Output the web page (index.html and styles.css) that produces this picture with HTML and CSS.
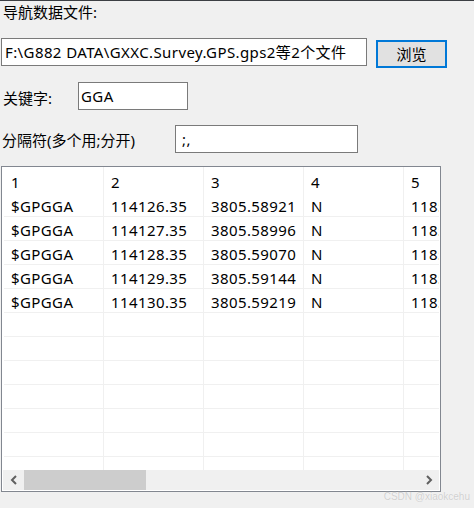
FILE: index.html
```html
<!DOCTYPE html>
<html lang="zh-CN">
<head>
<meta charset="utf-8">
<title>导航数据</title>
<link rel="stylesheet" href="styles.css">
</head>
<body>
<div class="window">
  <div class="label title-label">导航数据文件:</div>
  <div class="row file-row">
    <div class="field file-field">F:\G882 DATA\GXXC.Survey.GPS.gps2等2个文件</div>
    <div class="button">浏览</div>
  </div>
  <div class="row kw-row">
    <div class="label kw-label">关键字:</div>
    <div class="field kw-field">GGA</div>
  </div>
  <div class="row sep-row">
    <div class="label sep-label">分隔符(多个用;分开)</div>
    <div class="field sep-field">;,</div>
  </div>
  <div class="grid-box">
    <div class="grid">
      <div class="grow head">
        <div class="cell">1</div><div class="cell">2</div><div class="cell">3</div><div class="cell">4</div><div class="cell">5</div>
      </div>
      <div class="grow">
        <div class="cell">$GPGGA</div><div class="cell">114126.35</div><div class="cell">3805.58921</div><div class="cell">N</div><div class="cell">11851.23456</div>
      </div>
      <div class="grow">
        <div class="cell">$GPGGA</div><div class="cell">114127.35</div><div class="cell">3805.58996</div><div class="cell">N</div><div class="cell">11851.23521</div>
      </div>
      <div class="grow">
        <div class="cell">$GPGGA</div><div class="cell">114128.35</div><div class="cell">3805.59070</div><div class="cell">N</div><div class="cell">11851.23590</div>
      </div>
      <div class="grow">
        <div class="cell">$GPGGA</div><div class="cell">114129.35</div><div class="cell">3805.59144</div><div class="cell">N</div><div class="cell">11851.23662</div>
      </div>
      <div class="grow">
        <div class="cell">$GPGGA</div><div class="cell">114130.35</div><div class="cell">3805.59219</div><div class="cell">N</div><div class="cell">11851.23731</div>
      </div>
      <div class="grow"><div class="cell"></div><div class="cell"></div><div class="cell"></div><div class="cell"></div><div class="cell"></div></div>
      <div class="grow"><div class="cell"></div><div class="cell"></div><div class="cell"></div><div class="cell"></div><div class="cell"></div></div>
      <div class="grow"><div class="cell"></div><div class="cell"></div><div class="cell"></div><div class="cell"></div><div class="cell"></div></div>
      <div class="grow"><div class="cell"></div><div class="cell"></div><div class="cell"></div><div class="cell"></div><div class="cell"></div></div>
      <div class="grow"><div class="cell"></div><div class="cell"></div><div class="cell"></div><div class="cell"></div><div class="cell"></div></div>
      <div class="grow"><div class="cell"></div><div class="cell"></div><div class="cell"></div><div class="cell"></div><div class="cell"></div></div>
      <div class="grow"><div class="cell"></div><div class="cell"></div><div class="cell"></div><div class="cell"></div><div class="cell"></div></div>
    </div>
    <div class="hscroll">
      <div class="arrow">
        <svg width="8" height="10" viewBox="0 0 8 10"><path d="M6 1 L2 5 L6 9" fill="none" stroke="#606060" stroke-width="2"/></svg>
      </div>
      <div class="thumb"></div>
      <div class="track"></div>
      <div class="arrow">
        <svg width="8" height="10" viewBox="0 0 8 10"><path d="M2 1 L6 5 L2 9" fill="none" stroke="#606060" stroke-width="2"/></svg>
      </div>
    </div>
  </div>
  <div class="watermark">CSDN @xiaokcehu</div>
</div>
</body>
</html>
```
FILE: styles.css
```css
html, body {
  margin: 0;
  padding: 0;
}
body {
  background: #f0f0f0;
  border-top: 1px solid #3c3f44;
  font-family: "Noto Sans", "Noto Sans CJK SC", sans-serif;
  font-size: 15px;
  color: #000;
  width: 474px;
  height: 507px;
  overflow: hidden;
}
.window {
  position: relative;
  height: 507px;
  padding-left: 1px;
}
.label {
  white-space: nowrap;
  padding-left: 2px;
}
.title-label {
  height: 22px;
  line-height: 22px;
}
.row {
  display: flex;
  align-items: center;
}
.field {
  box-sizing: border-box;
  height: 28px;
  line-height: 26px;
  background: #fff;
  border: 1px solid #7a7a7a;
  white-space: nowrap;
  overflow: hidden;
  letter-spacing: 0.4px;
}
.file-row {
  margin-top: 15px;
  align-items: flex-start;
}
.file-field {
  width: 366px;
  padding-left: 3px;
}
.button {
  box-sizing: border-box;
  width: 71px;
  height: 28px;
  margin-top: 2px;
  margin-left: 9px;
  border: 2px solid #0078d7;
  background: #e1e1e1;
  text-align: center;
  line-height: 24px;
}
.kw-row {
  margin-top: 14px;
}
.kw-label {
  width: 75px;
  padding-top: 2px;
}
.kw-field {
  width: 110px;
  padding-left: 2px;
}
.sep-row {
  margin-top: 15px;
}
.sep-label {
  width: 173px;
  padding-left: 1px;
  padding-top: 1px;
}
.sep-field {
  width: 183px;
  padding-left: 6px;
}
.grid-box {
  box-sizing: border-box;
  margin-top: 13px;
  width: 440px;
  height: 326px;
  border: 1px solid #828790;
  background: #fff;
  padding: 0 1px 1px 1px;
  display: flex;
  flex-direction: column;
}
.grid {
  flex: 1;
  overflow: hidden;
  padding-left: 1px;
}
.grow {
  display: flex;
  height: 24px;
  border-bottom: 1px solid #f0f0f0;
  box-sizing: border-box;
}
.grow.head {
  height: 26px;
  border-bottom: none;
}
.cell {
  box-sizing: border-box;
  flex: 0 0 100px;
  width: 100px;
  border-right: 1px solid #f0f0f0;
  padding-left: 7px;
  padding-top: 2px;
  line-height: 23px;
  white-space: nowrap;
  overflow: hidden;
  letter-spacing: 0.4px;
}
.head .cell {
  padding-top: 2px;
  line-height: 27px;
}
.hscroll {
  display: flex;
  height: 20px;
  background: #f0f0f0;
}
.arrow {
  width: 21px;
  display: flex;
  align-items: center;
  justify-content: center;
}
.thumb {
  width: 122px;
  background: #cdcdcd;
}
.track {
  flex: 1;
}
.watermark {
  position: absolute;
  right: 4px;
  top: 490px;
  font-family: "Liberation Sans", sans-serif;
  font-size: 10px;
  color: #d0d0d0;
  text-shadow: 0 0 1px #ffffff;
  white-space: nowrap;
}
```
